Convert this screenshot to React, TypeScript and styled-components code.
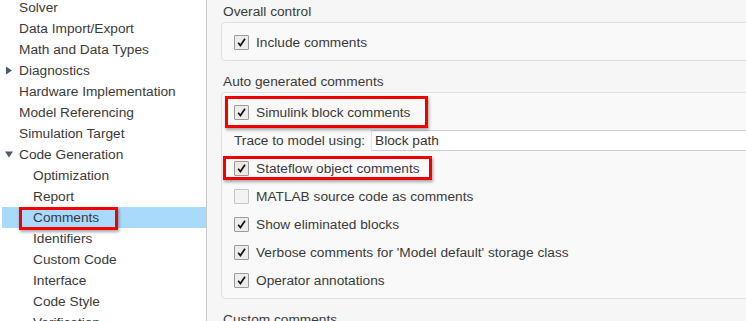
import styled, { createGlobalStyle } from "styled-components";

const GlobalStyle = createGlobalStyle`
   html, body {
      margin: 0;
      padding: 0;
      overflow: hidden;
   }
   body {
      font-family: "Liberation Sans", Arial, sans-serif;
      font-size: 13.7px;
      color: #3a3a3a;
   }
`;

const Window = styled.div`
   display: flex;
   width: 746px;
   height: 321px;
   overflow: hidden;
`;

const TreePane = styled.div`
   width: 206px;
   flex-shrink: 0;
   background: #ffffff;
   border-right: 1px solid #c9c9c9;
   overflow: hidden;
`;

const TreeList = styled.ul`
   list-style: none;
   margin: -3px 0 0 0;
   padding: 0;
`;

const TreeItem = styled.li<{ $level: number; $selected?: boolean }>`
   display: flex;
   align-items: center;
   height: 21px;
   margin-left: 2px;
   padding-left: ${(p) => (p.$level === 0 ? 17 : 31)}px;
   position: relative;
   background: ${(p) => (p.$selected ? "#a9d9fb" : "transparent")};
   white-space: nowrap;
   color: #3a3a3a;
`;

const Toggle = styled.span`
   position: absolute;
   left: 3px;
   top: 6px;
   width: 8px;
   height: 9px;
   display: flex;
   align-items: center;
   justify-content: center;
`;

const ContentPane = styled.div`
   flex: 1;
   background: #f6f6f6;
   padding: 2px 0 0 14px;
   display: flex;
   flex-direction: column;
`;

const SectionTitle = styled.div`
   height: 20px;
   line-height: 20px;
   padding-left: 2px;
   color: #3a3a3a;
`;

const Group = styled.div`
   margin-right: -12px;
   margin-bottom: 11px;
   background: #f9f9f9;
   border: 1px solid #e0e0e0;
   border-radius: 4px;
   padding: 5px 0 4px 12px;
   display: flex;
   flex-direction: column;
`;

const Row = styled.div`
   display: flex;
   align-items: center;
   height: 28px;
`;

const Option = styled.span`
   display: inline-flex;
   align-items: center;
   gap: 7px;
   position: relative;
   color: #3a3a3a;
   white-space: nowrap;
`;

const Mark = styled.span<{ $inset: string }>`
   display: inline-flex;
   align-items: center;
   position: relative;

   &::after {
      content: "";
      position: absolute;
      inset: ${(p) => p.$inset};
      border: 3px solid #f20000;
      box-shadow: 1px 2px 3px rgba(0, 0, 0, 0.35);
      pointer-events: none;
   }
`;

const Box = styled.span<{ $checked: boolean; $tint?: boolean }>`
   width: 15px;
   height: 15px;
   box-sizing: border-box;
   flex-shrink: 0;
   border: 1px solid ${(p) => (p.$checked ? "#9b9b9b" : "#c4c4c4")};
   border-radius: 1px;
   background: ${(p) =>
      p.$tint ? "#ece8e2" : p.$checked ? "#ececec" : "#f3f3f3"};
   display: flex;
   align-items: center;
   justify-content: center;
`;

const FieldLabel = styled.span`
   width: 137px;
   flex-shrink: 0;
   white-space: nowrap;
   color: #3a3a3a;
`;

const Field = styled.div`
   flex: 1;
   height: 21px;
   box-sizing: border-box;
   background: #ffffff;
   border-top: 1px solid #cfcfcf;
   border-bottom: 1px solid #cfcfcf;
   border-left: 1px solid #e2e2e2;
   display: flex;
   align-items: center;
   padding-left: 3px;
   color: #333333;
`;

const Arrow = ({ open }: { open: boolean }) => (
   <svg width="8" height="9" viewBox="0 0 8 9">
      {open ? (
         <polygon points="0,1.5 8,1.5 4,7.5" fill="#4b5b6e" />
      ) : (
         <polygon points="1,0.5 7,4.5 1,8.5" fill="#4b5b6e" />
      )}
   </svg>
);

const Check: React.FC<{ checked: boolean; tint?: boolean }> = ({ checked, tint }) => (
   <Box $checked={checked} $tint={tint}>
      {checked && (
         <svg width="11" height="11" viewBox="0 0 11 11">
            <path
               d="M2.2 5.8 L4.4 8.6 L9 1.8"
               fill="none"
               stroke="#111"
               strokeWidth="1.7"
               strokeLinejoin="miter"
            />
         </svg>
      )}
   </Box>
);

interface INode {
   label: string;
   level: number;
   toggle?: "open" | "closed";
   selected?: boolean;
}

const tree: INode[] = [
   { label: "Solver", level: 0 },
   { label: "Data Import/Export", level: 0 },
   { label: "Math and Data Types", level: 0 },
   { label: "Diagnostics", level: 0, toggle: "closed" },
   { label: "Hardware Implementation", level: 0 },
   { label: "Model Referencing", level: 0 },
   { label: "Simulation Target", level: 0 },
   { label: "Code Generation", level: 0, toggle: "open" },
   { label: "Optimization", level: 1 },
   { label: "Report", level: 1 },
   { label: "Comments", level: 1, selected: true },
   { label: "Identifiers", level: 1 },
   { label: "Custom Code", level: 1 },
   { label: "Interface", level: 1 },
   { label: "Code Style", level: 1 },
   { label: "Verification", level: 1 },
];

const App = () => {
   return (
      <>
         <GlobalStyle />
         <Window>
            <TreePane>
               <TreeList>
                  {tree.map((n) => (
                     <TreeItem key={n.label} $level={n.level} $selected={n.selected}>
                        {n.toggle && (
                           <Toggle>
                              <Arrow open={n.toggle === "open"} />
                           </Toggle>
                        )}
                        {n.selected ? (
                           <Mark $inset="-3px -19px -5px -14px">{n.label}</Mark>
                        ) : (
                           n.label
                        )}
                     </TreeItem>
                  ))}
               </TreeList>
            </TreePane>
            <ContentPane>
               <SectionTitle>Overall control</SectionTitle>
               <Group>
                  <Row>
                     <Option>
                        <Check checked />
                        Include comments
                     </Option>
                  </Row>
               </Group>

               <SectionTitle>Auto generated comments</SectionTitle>
               <Group>
                  <Row>
                     <Mark $inset="-9px -18px -8px -9px">
                        <Option>
                           <Check checked />
                           Simulink block comments
                        </Option>
                     </Mark>
                  </Row>
                  <Row>
                     <FieldLabel>Trace to model using:</FieldLabel>
                     <Field>Block path</Field>
                  </Row>
                  <Row>
                     <Mark $inset="-5px -12px -4px -11px">
                        <Option>
                           <Check checked tint />
                           Stateflow object comments
                        </Option>
                     </Mark>
                  </Row>
                  <Row>
                     <Option>
                        <Check checked={false} />
                        MATLAB source code as comments
                     </Option>
                  </Row>
                  <Row>
                     <Option>
                        <Check checked />
                        Show eliminated blocks
                     </Option>
                  </Row>
                  <Row>
                     <Option>
                        <Check checked />
                        Verbose comments for 'Model default' storage class
                     </Option>
                  </Row>
                  <Row>
                     <Option>
                        <Check checked />
                        Operator annotations
                     </Option>
                  </Row>
               </Group>

               <SectionTitle>Custom comments</SectionTitle>
            </ContentPane>
         </Window>
      </>
   );
};

export default App;
